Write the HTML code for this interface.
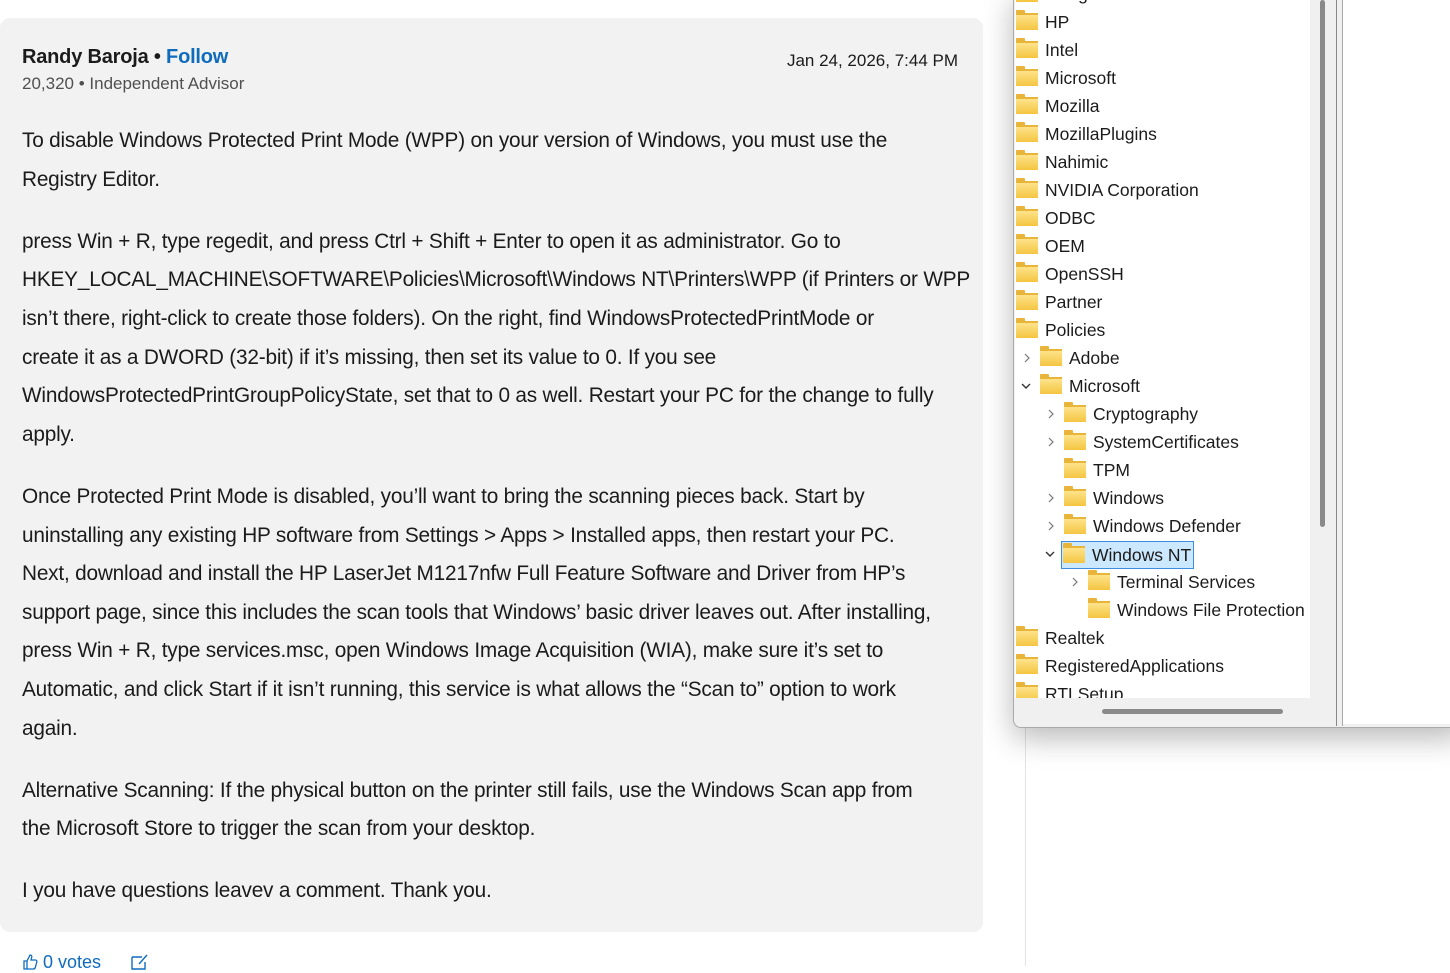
<!DOCTYPE html>
<html><head><meta charset="utf-8"><style>
body{margin:0;width:1450px;height:966px;background:#fff;position:relative;overflow:hidden;font-family:"Segoe UI","Liberation Sans",sans-serif;color:#1b1b1b}
.card{position:absolute;left:0;top:18px;width:983px;height:914px;background:#f2f2f2;border-radius:10px}
.name{position:absolute;left:22px;top:46px;font-size:20px;font-weight:bold;letter-spacing:-0.2px}
.name a{color:#0f6cbd;font-weight:bold}
.sub{position:absolute;left:22px;top:74px;font-size:17px;color:#505050}
.date{position:absolute;right:492px;top:51px;font-size:17px}
.body{position:absolute;left:22px;top:122px;width:960px;font-size:20.8px;line-height:38.6px;letter-spacing:-0.2px;white-space:nowrap}
.body p{margin:0 0 23.6px}
.foot{position:absolute;left:22px;top:952px;font-size:18px;color:#0f6cbd}
.vline{position:absolute;left:1025px;top:726px;width:1px;height:240px;background:#e3e3e3}
.win{position:absolute;left:1013px;top:-10px;width:450px;height:736px;background:#f0f0f0;border:1px solid #aaa;border-radius:8px;box-shadow:0 10px 30px rgba(0,0,0,.28)}
.tree{position:absolute;left:1015px;top:0;width:295px;height:698px;background:#fff;overflow:hidden}
.row{position:absolute;height:28px;font-size:17.5px;line-height:28px;white-space:nowrap}
.f{display:inline-block;width:22px;height:15px;background:linear-gradient(#fde38a,#f5c542);border-top:2px solid #e8b53a;position:relative;vertical-align:-2px;margin-right:7px}
.f:before{content:"";position:absolute;left:0;top:-5px;width:9px;height:4px;background:#e8b53a;border-radius:1px 1px 0 0}
.ch{position:absolute;width:10px;height:10px}
.sel{background:#cce8ff;border:1px solid #3d8ee0;padding:0 2px 0 1px}
.vs{position:absolute;left:1320px;top:0;width:5px;height:527px;background:#8a8a8a;border-radius:3px}
.hs{position:absolute;left:1102px;top:709px;width:181px;height:5px;background:#8a8a8a;border-radius:3px}
.b1{position:absolute;left:1336px;top:0;width:1px;height:726px;background:#888}
.b2{position:absolute;left:1342px;top:0;width:1px;height:726px;background:#aaa}
.rp{position:absolute;left:1343px;top:0;width:107px;height:724px;background:#fff}
</style></head><body>
<div class="card"></div>
<div class="name">Randy Baroja • <a>Follow</a></div>
<div class="sub">20,320 • Independent Advisor</div>
<div class="date">Jan 24, 2026, 7:44 PM</div>
<div class="body">
<p>To disable Windows Protected Print Mode (WPP) on your version of Windows, you must use the<br>Registry Editor.</p>
<p>press Win + R, type regedit, and press Ctrl + Shift + Enter to open it as administrator. Go to<br>HKEY_LOCAL_MACHINE\SOFTWARE\Policies\Microsoft\Windows NT\Printers\WPP (if Printers or WPP<br>isn’t there, right-click to create those folders). On the right, find WindowsProtectedPrintMode or<br>create it as a DWORD (32-bit) if it’s missing, then set its value to 0. If you see<br>WindowsProtectedPrintGroupPolicyState, set that to 0 as well. Restart your PC for the change to fully<br>apply.</p>
<p>Once Protected Print Mode is disabled, you’ll want to bring the scanning pieces back. Start by<br>uninstalling any existing HP software from Settings &gt; Apps &gt; Installed apps, then restart your PC.<br>Next, download and install the HP LaserJet M1217nfw Full Feature Software and Driver from HP’s<br>support page, since this includes the scan tools that Windows’ basic driver leaves out. After installing,<br>press Win + R, type services.msc, open Windows Image Acquisition (WIA), make sure it’s set to<br>Automatic, and click Start if it isn’t running, this service is what allows the “Scan to” option to work<br>again.</p>
<p>Alternative Scanning: If the physical button on the printer still fails, use the Windows Scan app from<br>the Microsoft Store to trigger the scan from your desktop.</p>
<p>I you have questions leavev a comment. Thank you.</p>
</div>
<div class="foot"><svg width="16" height="16" viewBox="0 0 16 16" style="vertical-align:-2px"><path d="M2 7h3v8H2zM5 7l3-6c1.5 0 2 1 1.7 2.5L9 6h4.5c1 0 1.6 1 1.3 2l-1.5 5.5c-.3.9-1 1.5-2 1.5H5" fill="none" stroke="#0f6cbd" stroke-width="1.3"/></svg> 0 votes &nbsp;&nbsp;&nbsp;&nbsp; <svg width="18" height="16" viewBox="0 0 18 16" style="vertical-align:-2px"><path d="M1 3h10M1 3v12h13V8M8 10l8-9" fill="none" stroke="#0f6cbd" stroke-width="1.4"/></svg></div>
<div class="vline"></div>
<div class="win"></div>
<div class="rp"></div>
<div class="b1"></div><div class="b2"></div>
<div class="tree">
<div class="row" style="left:1px;top:-20px"><span class="f"></span>Google</div>
<div class="row" style="left:1px;top:8px"><span class="f"></span>HP</div>
<div class="row" style="left:1px;top:36px"><span class="f"></span>Intel</div>
<div class="row" style="left:1px;top:64px"><span class="f"></span>Microsoft</div>
<div class="row" style="left:1px;top:92px"><span class="f"></span>Mozilla</div>
<div class="row" style="left:1px;top:120px"><span class="f"></span>MozillaPlugins</div>
<div class="row" style="left:1px;top:148px"><span class="f"></span>Nahimic</div>
<div class="row" style="left:1px;top:176px"><span class="f"></span>NVIDIA Corporation</div>
<div class="row" style="left:1px;top:204px"><span class="f"></span>ODBC</div>
<div class="row" style="left:1px;top:232px"><span class="f"></span>OEM</div>
<div class="row" style="left:1px;top:260px"><span class="f"></span>OpenSSH</div>
<div class="row" style="left:1px;top:288px"><span class="f"></span>Partner</div>
<div class="row" style="left:1px;top:316px"><span class="f"></span>Policies</div>
<svg class="ch" style="left:7px;top:353px" viewBox="0 0 10 10"><path d="M3 1l4 4-4 4" fill="none" stroke="#777" stroke-width="1.2"/></svg>
<div class="row" style="left:25px;top:344px"><span class="f"></span>Adobe</div>
<svg class="ch" style="left:6px;top:381px" viewBox="0 0 10 10"><path d="M1 3l4 4 4-4" fill="none" stroke="#333" stroke-width="1.4"/></svg>
<div class="row" style="left:25px;top:372px"><span class="f"></span>Microsoft</div>
<svg class="ch" style="left:31px;top:409px" viewBox="0 0 10 10"><path d="M3 1l4 4-4 4" fill="none" stroke="#777" stroke-width="1.2"/></svg>
<div class="row" style="left:49px;top:400px"><span class="f"></span>Cryptography</div>
<svg class="ch" style="left:31px;top:437px" viewBox="0 0 10 10"><path d="M3 1l4 4-4 4" fill="none" stroke="#777" stroke-width="1.2"/></svg>
<div class="row" style="left:49px;top:428px"><span class="f"></span>SystemCertificates</div>
<div class="row" style="left:49px;top:456px"><span class="f"></span>TPM</div>
<svg class="ch" style="left:31px;top:493px" viewBox="0 0 10 10"><path d="M3 1l4 4-4 4" fill="none" stroke="#777" stroke-width="1.2"/></svg>
<div class="row" style="left:49px;top:484px"><span class="f"></span>Windows</div>
<svg class="ch" style="left:31px;top:521px" viewBox="0 0 10 10"><path d="M3 1l4 4-4 4" fill="none" stroke="#777" stroke-width="1.2"/></svg>
<div class="row" style="left:49px;top:512px"><span class="f"></span>Windows Defender</div>
<svg class="ch" style="left:30px;top:549px" viewBox="0 0 10 10"><path d="M1 3l4 4 4-4" fill="none" stroke="#333" stroke-width="1.4"/></svg>
<div class="row sel" style="left:46px;top:541px;height:26px;line-height:26px"><span class="f"></span>Windows NT</div>
<svg class="ch" style="left:55px;top:577px" viewBox="0 0 10 10"><path d="M3 1l4 4-4 4" fill="none" stroke="#777" stroke-width="1.2"/></svg>
<div class="row" style="left:73px;top:568px"><span class="f"></span>Terminal Services</div>
<div class="row" style="left:73px;top:596px"><span class="f"></span>Windows File Protection</div>
<div class="row" style="left:1px;top:624px"><span class="f"></span>Realtek</div>
<div class="row" style="left:1px;top:652px"><span class="f"></span>RegisteredApplications</div>
<div class="row" style="left:1px;top:680px"><span class="f"></span>RTLSetup</div>
</div>
<div class="vs"></div><div class="hs"></div>
</body></html>
